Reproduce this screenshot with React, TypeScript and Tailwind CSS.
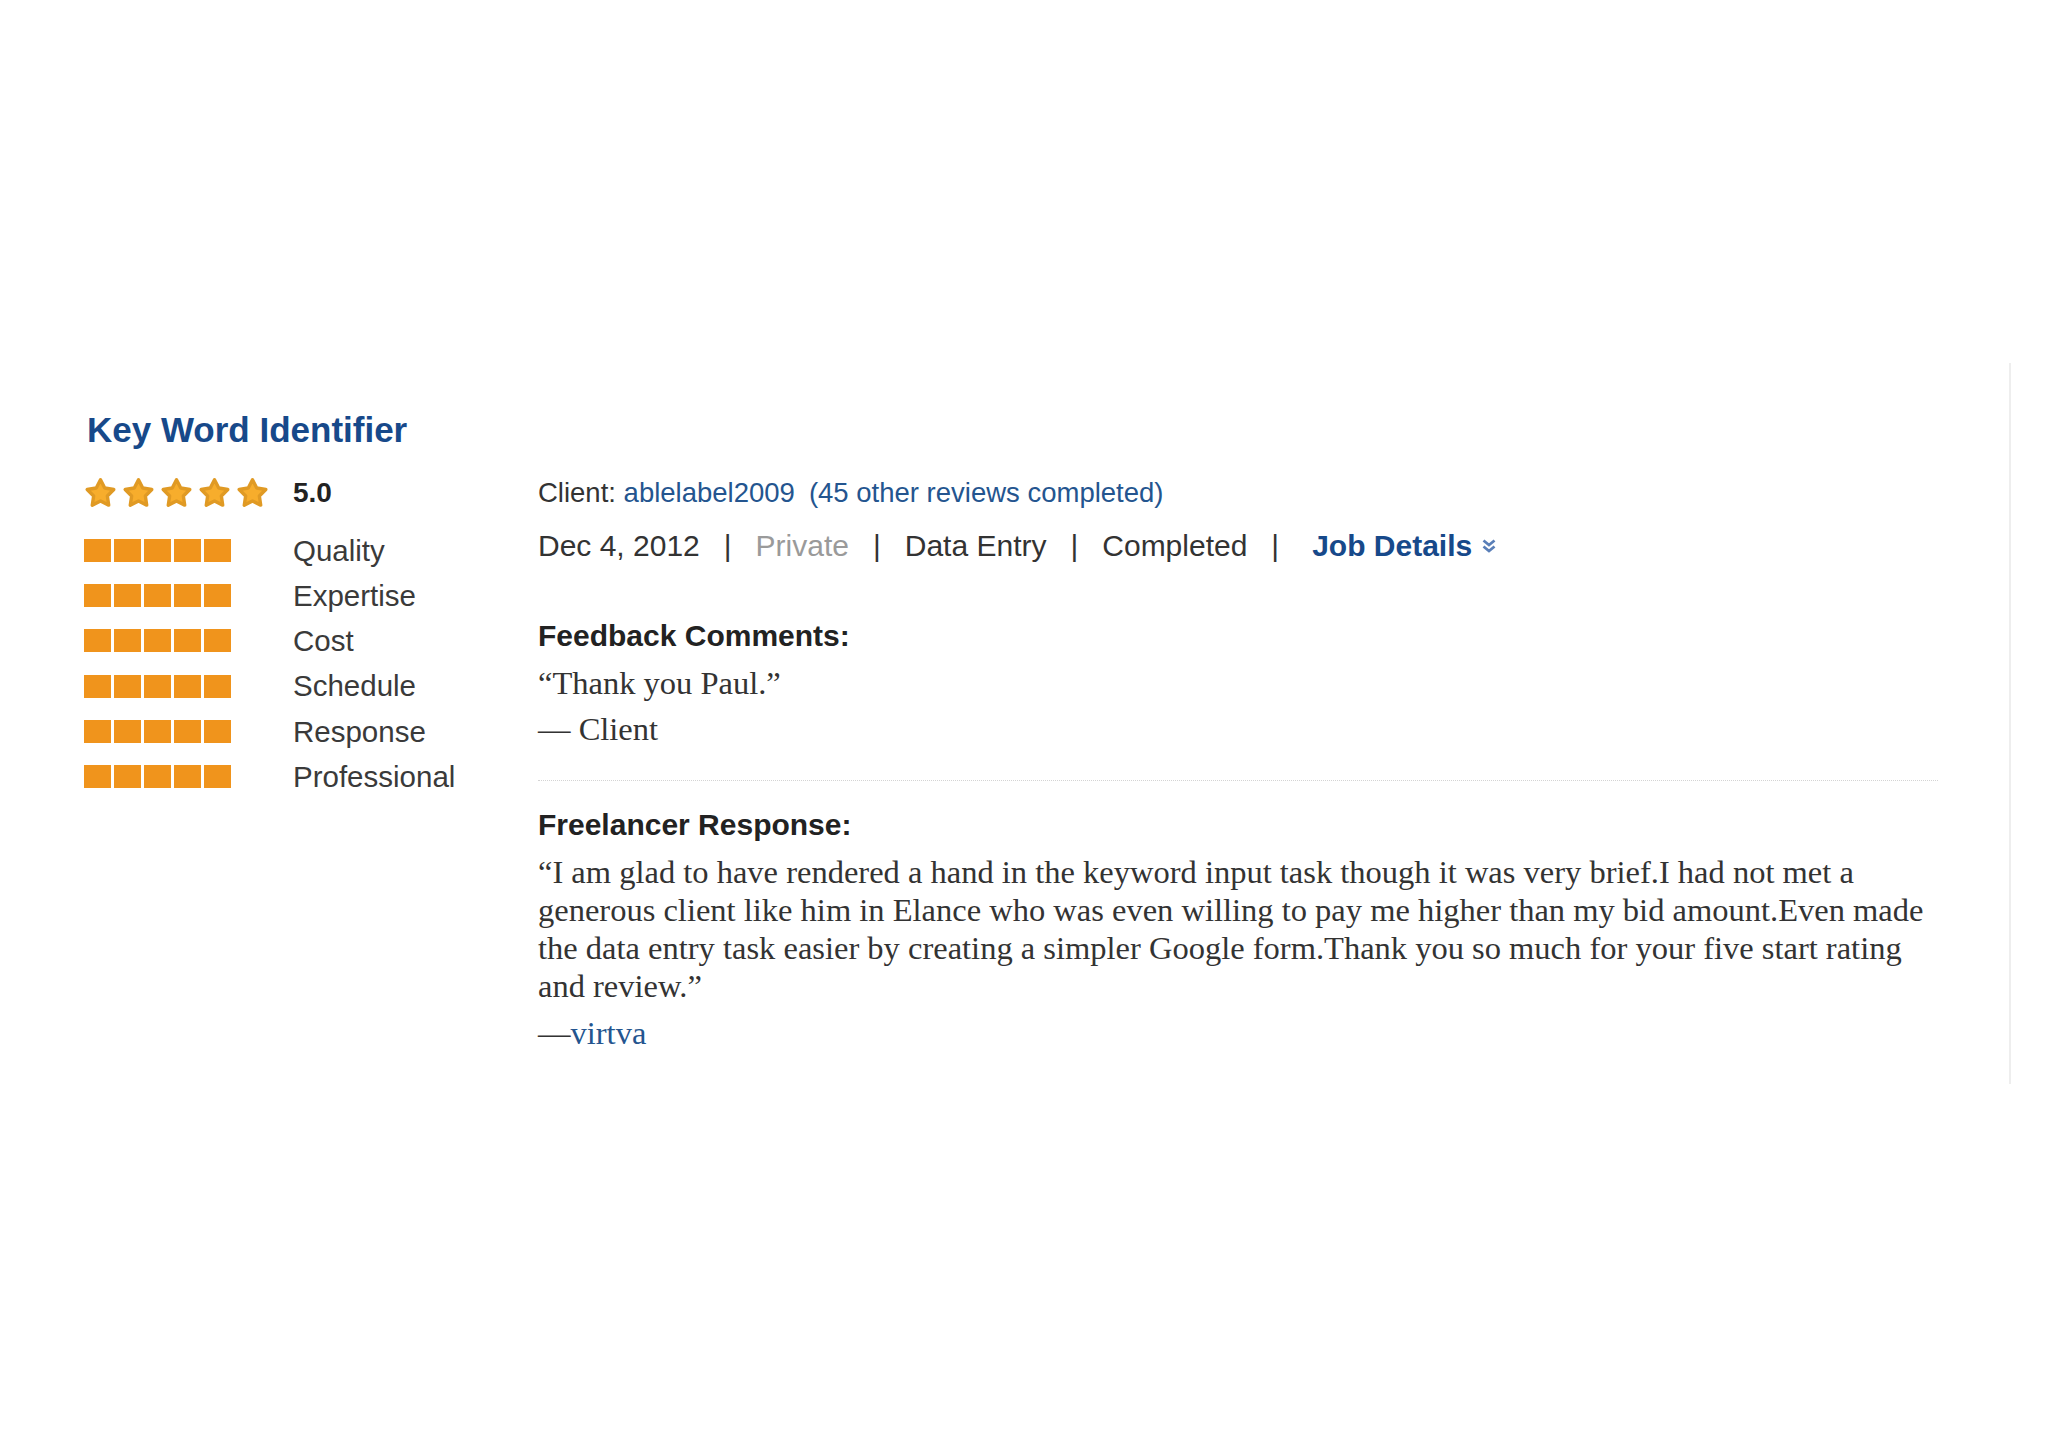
import React from "react";

const sans = { fontFamily: '"Liberation Sans", Arial, sans-serif' };
const serif = { fontFamily: '"Liberation Serif", "Times New Roman", serif' };

const ratings = ["Quality", "Expertise", "Cost", "Schedule", "Response", "Professional"];

const responseLines = [
  "“I am glad to have rendered a hand in the keyword input task though it was very brief.I had not met a",
  "generous client like him in Elance who was even willing to pay me higher than my bid amount.Even made",
  "the data entry task easier by creating a simpler Google form.Thank you so much for your five start rating",
  "and review.”",
];

function Star() {
  return (
    <svg width="33" height="32" viewBox="0 0 33 32">
      <path
        d="M16.5 2.8 L20.73 10.98 L29.81 12.47 L23.35 19.02 L24.73 28.13 L16.5 24 L8.27 28.13 L9.65 19.02 L3.19 12.47 L12.27 10.98 Z"
        fill="#f7ad2c"
        stroke="#e09a24"
        strokeWidth="3.4"
        strokeLinejoin="round"
      />
    </svg>
  );
}

function Bars() {
  return (
    <div className="flex gap-[3px] w-[209px]">
      {[0, 1, 2, 3, 4].map((i) => (
        <div key={i} className="w-[27px] h-[23px] bg-[#f0941c]" />
      ))}
    </div>
  );
}

function Pipe() {
  return <span className="mx-[24px] text-[#333]">|</span>;
}

export default function App() {
  return (
    <div className="min-h-[1447px] bg-white pt-[363px]" style={sans}>
      <div className="w-[2011px] h-[721px] border-r-2 border-[#eeeeee] pl-[84px] pt-[49px]">
        <h1 className="ml-[3px] text-[35px] leading-none font-bold text-[#17498a]">
          Key Word Identifier
        </h1>

        <div className="flex items-start mt-[33px]">
          {/* left: stars and category bars */}
          <div className="w-[454px] shrink-0">
            <div className="flex items-center h-[26px]">
              <div className="flex gap-[5px] w-[209px]">
                {[0, 1, 2, 3, 4].map((i) => (
                  <Star key={i} />
                ))}
              </div>
              <span className="text-[28px] font-bold text-[#222]">5.0</span>
            </div>
            <div className="mt-[22px]">
              {ratings.map((r) => (
                <div key={r} className="flex items-center h-[45.2px]">
                  <Bars />
                  <span className="text-[29.5px] leading-none text-[#3a3a3a]">{r}</span>
                </div>
              ))}
            </div>
          </div>

          {/* right: review details */}
          <div className="w-[1400px]">
            <div className="h-[26px] leading-[26px] text-[27.5px] text-[#333]">
              Client: <span className="text-[#24558f]">ablelabel2009</span>
              <span className="ml-[14px] text-[#24558f]">(45 other reviews completed)</span>
            </div>
            <div className="mt-[26px] h-[28px] leading-[28px] text-[30px] text-[#333] flex items-center">
              <span>Dec 4, 2012</span>
              <Pipe />
              <span className="text-[#9a9a9a]">Private</span>
              <Pipe />
              <span>Data Entry</span>
              <Pipe />
              <span>Completed</span>
              <Pipe />
              <span className="ml-[9px] font-bold text-[#17498a]">Job Details</span>
              <svg className="ml-[8px]" width="18" height="18" viewBox="0 0 18 18">
                <path d="M3.5 3.5 L9 8 L14.5 3.5" fill="none" stroke="#5a7fb8" strokeWidth="2.8" />
                <path d="M3.5 9.5 L9 14 L14.5 9.5" fill="none" stroke="#5a7fb8" strokeWidth="2.8" />
              </svg>
            </div>

            <div className="mt-[62px] h-[28px] leading-[28px] text-[30px] font-bold text-[#222]">
              Feedback Comments:
            </div>
            <div className="mt-[10px] text-[32.5px] leading-[46px] text-[#333]" style={serif}>
              <p>“Thank you Paul.”</p>
              <p>— Client</p>
            </div>

            <div className="mt-[28px] border-t border-dotted border-[#d4d4d4]" />

            <div className="mt-[30px] h-[28px] leading-[28px] text-[30px] font-bold text-[#222]">
              Freelancer Response:
            </div>
            <div className="mt-[14px] text-[32.5px] leading-[38px] text-[#333]" style={serif}>
              {responseLines.map((l) => (
                <p key={l} className="whitespace-nowrap">
                  {l}
                </p>
              ))}
            </div>
            <p className="mt-[5px] text-[32.5px] leading-[46px] text-[#333]" style={serif}>
              —<span className="text-[#24558f]">virtva</span>
            </p>
          </div>
        </div>
      </div>
    </div>
  );
}
